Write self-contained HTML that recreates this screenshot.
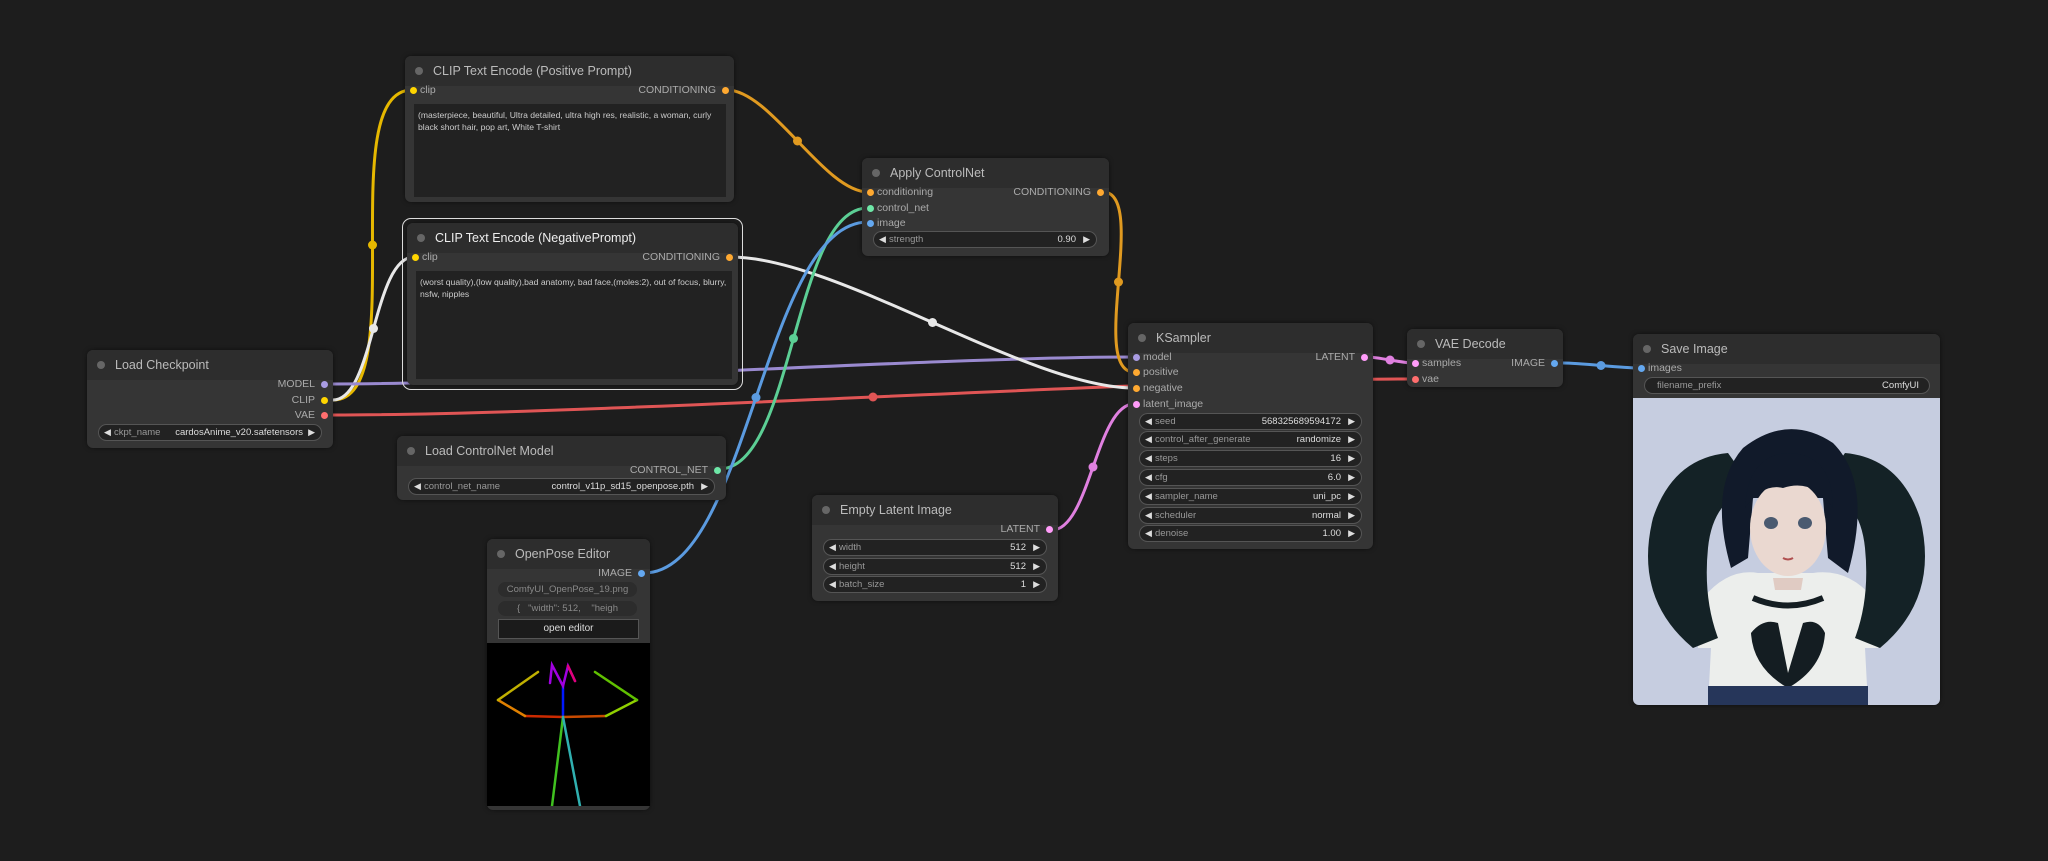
<!DOCTYPE html>
<html><head><meta charset="utf-8"><style>
body{margin:0;width:2048px;height:861px;background:#1d1d1d;overflow:hidden;font-family:"Liberation Sans",sans-serif;position:relative}
.n{position:absolute;background:#353535;border-radius:6px;box-shadow:0 0 4px rgba(0,0,0,.5)}
.t{height:30px;background:#2d2d2d;border-radius:6px 6px 0 0;color:#bbb;font-size:12.5px;line-height:30px;padding-left:28px;position:relative}
.t:before{content:"";position:absolute;left:10px;top:11px;width:8px;height:8px;border-radius:50%;background:#666}
.r{position:absolute;font-size:10.5px;color:#aaa;white-space:nowrap}
.d{position:absolute;width:7px;height:7px;border-radius:50%}
.w{position:absolute;height:15px;border:1px solid #555;background:#222;border-radius:9px;font-size:9.5px;line-height:15px;color:#999;white-space:nowrap}
.w .a{position:absolute;left:5px;color:#ddd;font-size:9px}
.w .b{position:absolute;right:6px;color:#ddd;font-size:9px}
.w .l{position:absolute;left:15px}
.w .v{position:absolute;right:20px;color:#ddd}
.ta{position:absolute;background:#222;color:#ccc;font-size:8.6px;line-height:12px;padding:5px 4px;box-sizing:border-box}
svg{position:absolute;left:0;top:0}
</style></head><body>
<svg id="L" width="2048" height="861"></svg>

<div class="n" style="left:87px;top:350px;width:246px;height:98px"><div class="t">Load Checkpoint</div>
<div class="r" style="right:18px;top:28px">MODEL</div><div class="d" style="right:5px;top:31px;background:#a99ce3"></div>
<div class="r" style="right:18px;top:44px">CLIP</div><div class="d" style="right:5px;top:47px;background:#ffd500"></div>
<div class="r" style="right:18px;top:59px">VAE</div><div class="d" style="right:5px;top:62px;background:#ff6e6e"></div>
<div class="w" style="left:11px;top:74px;width:222px"><span class="a">◀</span><span class="l">ckpt_name</span><span class="v" style="right:18px">cardosAnime_v20.safetensors</span><span class="b">▶</span></div>
</div>

<div class="n" style="left:405px;top:56px;width:329px;height:146px"><div class="t">CLIP Text Encode (Positive Prompt)</div>
<div class="d" style="left:5px;top:31px;background:#ffd500"></div><div class="r" style="left:15px;top:28px">clip</div>
<div class="r" style="right:18px;top:28px">CONDITIONING</div><div class="d" style="right:5px;top:31px;background:#ffa931"></div>
<div class="ta" style="left:9px;top:48px;width:312px;height:93px">(masterpiece, beautiful, Ultra detailed, ultra high res, realistic, a woman, curly black short hair, pop art, White T-shirt</div>
</div>

<div style="position:absolute;left:402px;top:218px;width:339px;height:170px;border:1.5px solid #ddd;border-radius:9px"></div>
<div class="n" style="left:407px;top:223px;width:331px;height:162px"><div class="t" style="color:#eee">CLIP Text Encode (NegativePrompt)</div>
<div class="d" style="left:5px;top:31px;background:#ffd500"></div><div class="r" style="left:15px;top:28px">clip</div>
<div class="r" style="right:18px;top:28px">CONDITIONING</div><div class="d" style="right:5px;top:31px;background:#ffa931"></div>
<div class="ta" style="left:9px;top:48px;width:316px;height:108px">(worst quality),(low quality),bad anatomy, bad face,(moles:2), out of focus, blurry, nsfw, nipples</div>
</div>

<div class="n" style="left:862px;top:158px;width:247px;height:98px"><div class="t">Apply ControlNet</div>
<div class="d" style="left:5px;top:31px;background:#ffa931"></div><div class="r" style="left:15px;top:28px">conditioning</div>
<div class="r" style="right:18px;top:28px">CONDITIONING</div><div class="d" style="right:5px;top:31px;background:#ffa931"></div>
<div class="d" style="left:5px;top:47px;background:#6ee7a7"></div><div class="r" style="left:15px;top:44px">control_net</div>
<div class="d" style="left:5px;top:62px;background:#64a8f0"></div><div class="r" style="left:15px;top:59px">image</div>
<div class="w" style="left:11px;top:73px;width:222px"><span class="a">◀</span><span class="l">strength</span><span class="v">0.90</span><span class="b">▶</span></div>
</div>

<div class="n" style="left:397px;top:436px;width:329px;height:64px"><div class="t">Load ControlNet Model</div>
<div class="r" style="right:18px;top:28px">CONTROL_NET</div><div class="d" style="right:5px;top:31px;background:#6ee7a7"></div>
<div class="w" style="left:11px;top:42px;width:305px"><span class="a">◀</span><span class="l">control_net_name</span><span class="v">control_v11p_sd15_openpose.pth</span><span class="b">▶</span></div>
</div>

<div class="n" style="left:487px;top:539px;width:163px;height:271px"><div class="t">OpenPose Editor</div>
<div class="r" style="right:18px;top:28px">IMAGE</div><div class="d" style="right:5px;top:31px;background:#64a8f0"></div>
<div class="w" style="left:11px;top:43px;width:139px;border:none;background:#2c2c2c;text-align:center;color:#888">ComfyUI_OpenPose_19.png</div>
<div class="w" style="left:11px;top:62px;width:139px;border:none;background:#2c2c2c;text-align:center;color:#888">{ &nbsp;&nbsp;"width": 512, &nbsp;&nbsp;&nbsp;"heigh</div>
<div style="position:absolute;left:11px;top:80px;width:139px;height:18px;border:1px solid #555;background:#1b1b1b;color:#ddd;font-size:10px;text-align:center;line-height:18px">open editor</div>
<svg style="left:0;top:104px" width="163" height="163"><rect width="163" height="163" fill="#000"/>
<g stroke-width="2.5" fill="none" stroke-linecap="round">
<line x1="76" y1="74" x2="76" y2="43" stroke="#0018ff"/>
<line x1="38" y1="73" x2="76" y2="74" stroke="#cc2a00"/><line x1="76" y1="74" x2="119" y2="73" stroke="#c84a00"/>
<line x1="38" y1="73" x2="11" y2="57" stroke="#e08000"/><line x1="11" y1="57" x2="51" y2="29" stroke="#c0b000"/>
<line x1="119" y1="73" x2="150" y2="57" stroke="#90d000"/><line x1="150" y1="57" x2="108" y2="29" stroke="#60c000"/>
<line x1="76" y1="74" x2="65" y2="163" stroke="#40c020"/><line x1="76" y1="74" x2="93" y2="163" stroke="#30b0b0"/>
<polyline points="63,40 65,22 76,43 81,23 88,38" stroke="#a000e0"/><line x1="81" y1="23" x2="88" y2="38" stroke="#e0007a"/>
</g></svg>
</div>

<div class="n" style="left:812px;top:495px;width:246px;height:106px"><div class="t">Empty Latent Image</div>
<div class="r" style="right:18px;top:28px">LATENT</div><div class="d" style="right:5px;top:31px;background:#ff9cf9"></div>
<div class="w" style="left:11px;top:44px;width:222px"><span class="a">◀</span><span class="l">width</span><span class="v">512</span><span class="b">▶</span></div>
<div class="w" style="left:11px;top:63px;width:222px"><span class="a">◀</span><span class="l">height</span><span class="v">512</span><span class="b">▶</span></div>
<div class="w" style="left:11px;top:81px;width:222px"><span class="a">◀</span><span class="l">batch_size</span><span class="v">1</span><span class="b">▶</span></div>
</div>

<div class="n" style="left:1128px;top:323px;width:245px;height:226px"><div class="t">KSampler</div>
<div class="d" style="left:5px;top:31px;background:#a99ce3"></div><div class="r" style="left:15px;top:28px">model</div>
<div class="r" style="right:18px;top:28px">LATENT</div><div class="d" style="right:5px;top:31px;background:#ff9cf9"></div>
<div class="d" style="left:5px;top:46px;background:#ffa931"></div><div class="r" style="left:15px;top:43px">positive</div>
<div class="d" style="left:5px;top:62px;background:#ffa931"></div><div class="r" style="left:15px;top:59px">negative</div>
<div class="d" style="left:5px;top:78px;background:#ff9cf9"></div><div class="r" style="left:15px;top:75px">latent_image</div>
<div class="w" style="left:11px;top:90px;width:221px"><span class="a">◀</span><span class="l">seed</span><span class="v">568325689594172</span><span class="b">▶</span></div>
<div class="w" style="left:11px;top:108px;width:221px"><span class="a">◀</span><span class="l">control_after_generate</span><span class="v">randomize</span><span class="b">▶</span></div>
<div class="w" style="left:11px;top:127px;width:221px"><span class="a">◀</span><span class="l">steps</span><span class="v">16</span><span class="b">▶</span></div>
<div class="w" style="left:11px;top:146px;width:221px"><span class="a">◀</span><span class="l">cfg</span><span class="v">6.0</span><span class="b">▶</span></div>
<div class="w" style="left:11px;top:165px;width:221px"><span class="a">◀</span><span class="l">sampler_name</span><span class="v">uni_pc</span><span class="b">▶</span></div>
<div class="w" style="left:11px;top:184px;width:221px"><span class="a">◀</span><span class="l">scheduler</span><span class="v">normal</span><span class="b">▶</span></div>
<div class="w" style="left:11px;top:202px;width:221px"><span class="a">◀</span><span class="l">denoise</span><span class="v">1.00</span><span class="b">▶</span></div>
</div>

<div class="n" style="left:1407px;top:329px;width:156px;height:58px"><div class="t">VAE Decode</div>
<div class="d" style="left:5px;top:31px;background:#ff9cf9"></div><div class="r" style="left:15px;top:28px">samples</div>
<div class="r" style="right:18px;top:28px">IMAGE</div><div class="d" style="right:5px;top:31px;background:#64a8f0"></div>
<div class="d" style="left:5px;top:47px;background:#ff6e6e"></div><div class="r" style="left:15px;top:44px">vae</div>
</div>

<div class="n" style="left:1633px;top:334px;width:307px;height:371px;overflow:hidden"><div class="t">Save Image</div>
<div class="d" style="left:5px;top:31px;background:#64a8f0"></div><div class="r" style="left:15px;top:28px">images</div>
<div class="w" style="left:11px;top:43px;width:284px"><span class="l" style="left:12px">filename_prefix</span><span class="v" style="right:10px">ComfyUI</span></div>
<svg style="left:0;top:64px" width="307" height="307">
<rect width="307" height="307" fill="#c6cde0"/>
<path d="M70 200 Q95 170 125 175 L180 175 Q215 170 240 200 L245 250 L232 250 L235 307 L75 307 L78 250 L65 250 Z" fill="#eceeec"/>
<path d="M60 250 Q0 200 20 120 Q40 60 95 55 L120 90 Q80 100 75 150 Q70 200 85 240 Z" fill="#142226"/>
<path d="M247 250 Q307 200 287 120 Q267 60 212 55 L187 90 Q227 100 232 150 Q237 200 222 240 Z" fill="#142226"/>
<path d="M98 170 Q75 90 110 50 Q155 15 200 45 Q240 85 215 175 L195 160 L190 100 L120 100 L115 160 Z" fill="#111a2a"/>
<ellipse cx="155" cy="130" rx="38" ry="48" fill="#ead8d0"/>
<path d="M112 110 Q115 55 158 55 Q200 58 200 110 Q180 80 150 90 Q130 85 112 110 Z" fill="#111a2a"/>
<ellipse cx="138" cy="125" rx="7" ry="6" fill="#4a5a70"/><ellipse cx="172" cy="125" rx="7" ry="6" fill="#4a5a70"/>
<path d="M150 160 Q155 163 160 160" stroke="#b05050" stroke-width="2" fill="none"/>
<path d="M140 180 L170 180 L168 192 L142 192 Z" fill="#e0cbc3"/>
<path d="M120 200 Q155 215 190 200" stroke="#141d22" stroke-width="6" fill="none"/>
<path d="M118 235 Q130 220 145 225 L155 275 L170 225 Q185 220 192 235 Q190 270 155 290 Q120 270 118 235 Z" fill="#141d22"/>
<path d="M75 288 L235 288 L235 307 L75 307 Z" fill="#26365a"/>
</svg>
</div>

<script>
const S=document.getElementById('L');
const links=[
[333,400,412,90,'#e6b800'],[333,400,414,257,'#e8e8e8'],
[333,384,1134,357,'#9a8ad0'],[333,415,1413,379,'#e05555'],
[727,90,868,192,'#e09a20'],[1103,192,1134,372,'#e09a20'],
[731,257,1134,388,'#e8e8e8'],[719,469,868,208,'#5ccf95'],
[644,573,868,222,'#5b9be0'],[1052,530,1134,404,'#e080e0'],
[1367,357,1413,363,'#e080e0'],[1563,363,1639,368,'#5b9be0']];
let h='';
for(const [x1,y1,x2,y2,c] of links){
 const dist=Math.hypot(x2-x1,y2-y1);const d=dist*0.25;
 const c1x=x1+d,c2x=x2-d;
 h+=`<path d="M${x1} ${y1}C${c1x} ${y1} ${c2x} ${y2} ${x2} ${y2}" stroke="${c}" stroke-width="3" fill="none"/>`;
 const mx=0.125*x1+0.375*c1x+0.375*c2x+0.125*x2, my=(y1+y2)/2;
 h+=`<circle cx="${mx}" cy="${my}" r="4.5" fill="${c}"/>`;
}
S.innerHTML=h;
</script>
</body></html>
